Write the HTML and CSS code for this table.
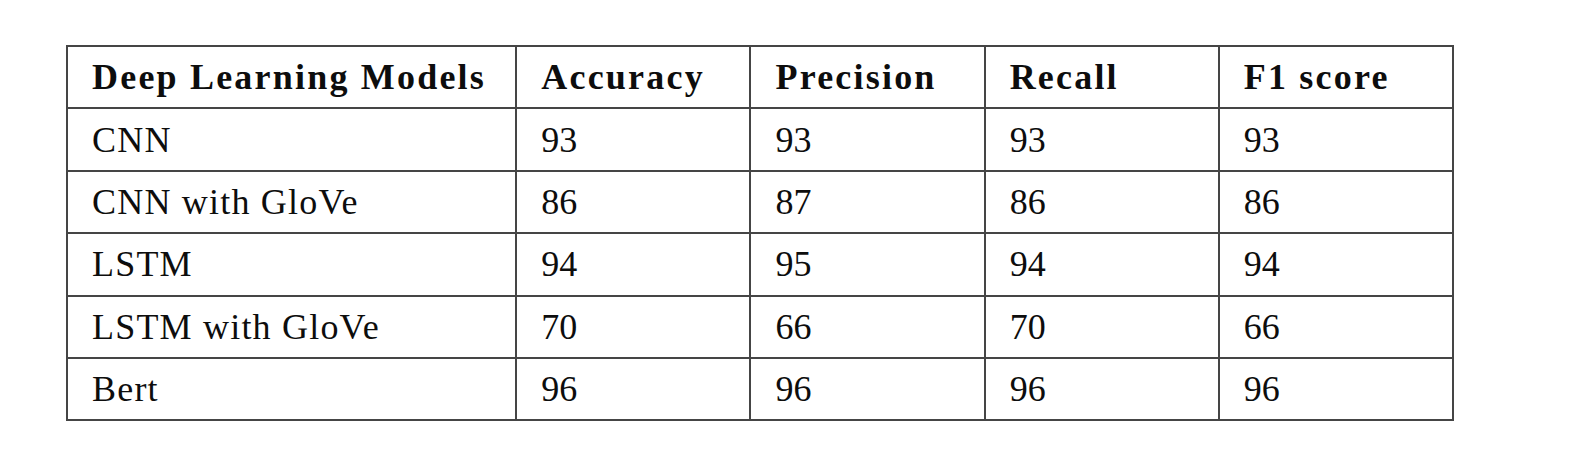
FILE: index.html
```html
<!DOCTYPE html>
<html>
<head>
    <title>Deep Learning Models</title>
    <link rel="stylesheet" href="styles.css">
</head>
<body>

    <table class="results">
        <colgroup>
            <col class="col-model">
            <col class="col-metric">
            <col class="col-metric">
            <col class="col-metric">
            <col class="col-metric">
        </colgroup>
        <thead>
            <tr>
                <th>Deep Learning Models</th>
                <th>Accuracy</th>
                <th>Precision</th>
                <th>Recall</th>
                <th>F1 score</th>
            </tr>
        </thead>
        <tbody>
            <tr><td class="model">CNN</td><td>93</td><td>93</td><td>93</td><td>93</td></tr>
            <tr><td class="model">CNN with GloVe</td><td>86</td><td>87</td><td>86</td><td>86</td></tr>
            <tr><td class="model">LSTM</td><td>94</td><td>95</td><td>94</td><td>94</td></tr>
            <tr><td class="model">LSTM with GloVe</td><td>70</td><td>66</td><td>70</td><td>66</td></tr>
            <tr><td class="model">Bert</td><td>96</td><td>96</td><td>96</td><td>96</td></tr>
        </tbody>
    </table>

</body>
</html>
```

FILE: styles.css
```css
body {
    font-family: "Liberation Serif", "Times New Roman", serif;
    margin: 0;
    padding: 45px 0 0 66px;
    background: #fff;
    color: #0d0d0d;
}

.results {
    border-collapse: collapse;
    table-layout: fixed;
    width: 1388px;
}

.col-model {
    width: 449px;
}

.col-metric {
    width: 234px;
}

.results th,
.results td {
    border: 2px solid #454545;
    height: 60.4px;
    padding: 0 0 0 24px;
    text-align: left;
    vertical-align: middle;
    font-size: 36px;
    line-height: 1;
}

.results th {
    font-weight: bold;
    letter-spacing: 2.2px;
}

.results td {
    font-weight: normal;
}

.results td.model {
    letter-spacing: 1.2px;
}
```
